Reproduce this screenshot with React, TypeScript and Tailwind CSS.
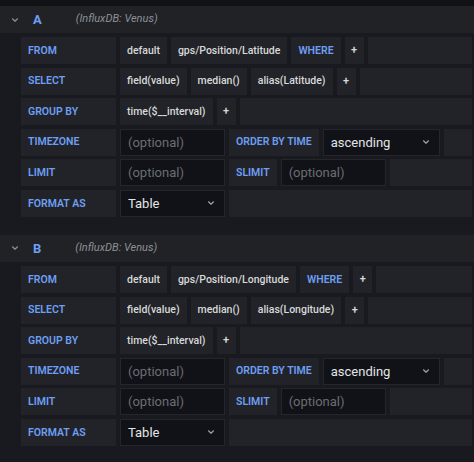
import React from "react";

type Cell =
  | { kind: "label"; text: string; w?: string }
  | { kind: "kw"; text: string; w?: string }
  | { kind: "val"; text: string; w?: string }
  | { kind: "plus" }
  | { kind: "input"; w: string }
  | { kind: "select"; text: string; w: string }
  | { kind: "fill" };

const Chevron = ({ className = "" }: { className?: string }) => (
  <svg width="8" height="6" viewBox="0 0 8 6" className={className}>
    <path d="M1.5 1.8 L4 4.2 L6.5 1.8" fill="none" stroke="currentColor" strokeWidth="1.2" strokeLinecap="round" strokeLinejoin="round" />
  </svg>
);

function Row({ label, cells }: { label: string; cells: Cell[] }) {
  return (
    <div className="flex h-[27px] gap-[4px]">
      <div className="w-[95px] shrink-0 bg-[#212328] flex items-center pl-[7px] text-[10.5px] font-semibold text-[#6e9ff5]">
        {label}
      </div>
      {cells.map((c, i) => {
        if (c.kind === "label" || c.kind === "kw")
          return (
            <div key={i} className="shrink-0 bg-[#212328] flex items-center px-[7px] text-[10.5px] font-semibold text-[#6e9ff5]">
              {c.text}
            </div>
          );
        if (c.kind === "val")
          return (
            <div key={i} className="shrink-0 bg-[#212328] flex items-center px-[7px] text-[10.5px] font-medium text-[#d8d9da]">
              {c.text}
            </div>
          );
        if (c.kind === "plus")
          return (
            <div key={i} className="shrink-0 w-[19px] bg-[#212328] flex items-center justify-center text-[11px] font-semibold text-[#d8d9da]">
              +
            </div>
          );
        if (c.kind === "input")
          return (
            <div key={i} className={`shrink-0 ${c.w} bg-[#111217] border border-[#24262b] flex items-center pl-[7px] text-[13px] text-[#6a6d74]`}>
              (optional)
            </div>
          );
        if (c.kind === "select")
          return (
            <div key={i} className={`shrink-0 ${c.w} bg-[#111217] border border-[#24262b] flex items-center justify-between pl-[7px] pr-[9px] text-[13px] text-[#e4e5e7]`}>
              <span>{c.text}</span>
              <Chevron className="text-[#9fa1a6]" />
            </div>
          );
        return <div key={i} className="flex-1 bg-[#212328]" />;
      })}
    </div>
  );
}

function Section({ letter, measurement, alias }: { letter: string; measurement: string; alias: string }) {
  return (
    <div>
      <div className="h-[27px] bg-[#202226] flex items-center">
        <Chevron className="ml-[11px] text-[#8e9096]" />
        <span className="ml-[14px] text-[13px] font-bold text-[#6e9ff5]">{letter}</span>
        <span className="ml-[34px] text-[11px] italic text-[#8e9096]">(InfluxDB: Venus)</span>
      </div>
      <div className="pt-[4px] pl-[21px] pr-[2px] pb-[18px] flex flex-col gap-[3.6px]">
        <Row
          label="FROM"
          cells={[
            { kind: "val", text: "default" },
            { kind: "val", text: measurement },
            { kind: "kw", text: "WHERE" },
            { kind: "plus" },
            { kind: "fill" },
          ]}
        />
        <Row
          label="SELECT"
          cells={[
            { kind: "val", text: "field(value)" },
            { kind: "val", text: "median()" },
            { kind: "val", text: alias },
            { kind: "plus" },
            { kind: "fill" },
          ]}
        />
        <Row label="GROUP BY" cells={[{ kind: "val", text: "time($__interval)" }, { kind: "plus" }, { kind: "fill" }]} />
        <Row
          label="TIMEZONE"
          cells={[
            { kind: "input", w: "w-[105px]" },
            { kind: "label", text: "ORDER BY TIME" },
            { kind: "select", text: "ascending", w: "w-[117px]" },
            { kind: "fill" },
          ]}
        />
        <Row
          label="LIMIT"
          cells={[
            { kind: "input", w: "w-[105px]" },
            { kind: "label", text: "SLIMIT" },
            { kind: "input", w: "w-[105px]" },
            { kind: "fill" },
          ]}
        />
        <Row label="FORMAT AS" cells={[{ kind: "select", text: "Table", w: "w-[105px]" }, { kind: "fill" }]} />
      </div>
    </div>
  );
}

export default function App() {
  return (
    <div className="w-[474px] h-[462px] overflow-hidden bg-[#181a1f] pt-[6px] font-['Roboto',_'Liberation_Sans',_sans-serif]" style={{ boxShadow: "inset 0 6px 0 #111216" }}>
      <Section letter="A" measurement="gps/Position/Latitude" alias="alias(Latitude)" />
      <Section letter="B" measurement="gps/Position/Longitude" alias="alias(Longitude)" />
    </div>
  );
}
